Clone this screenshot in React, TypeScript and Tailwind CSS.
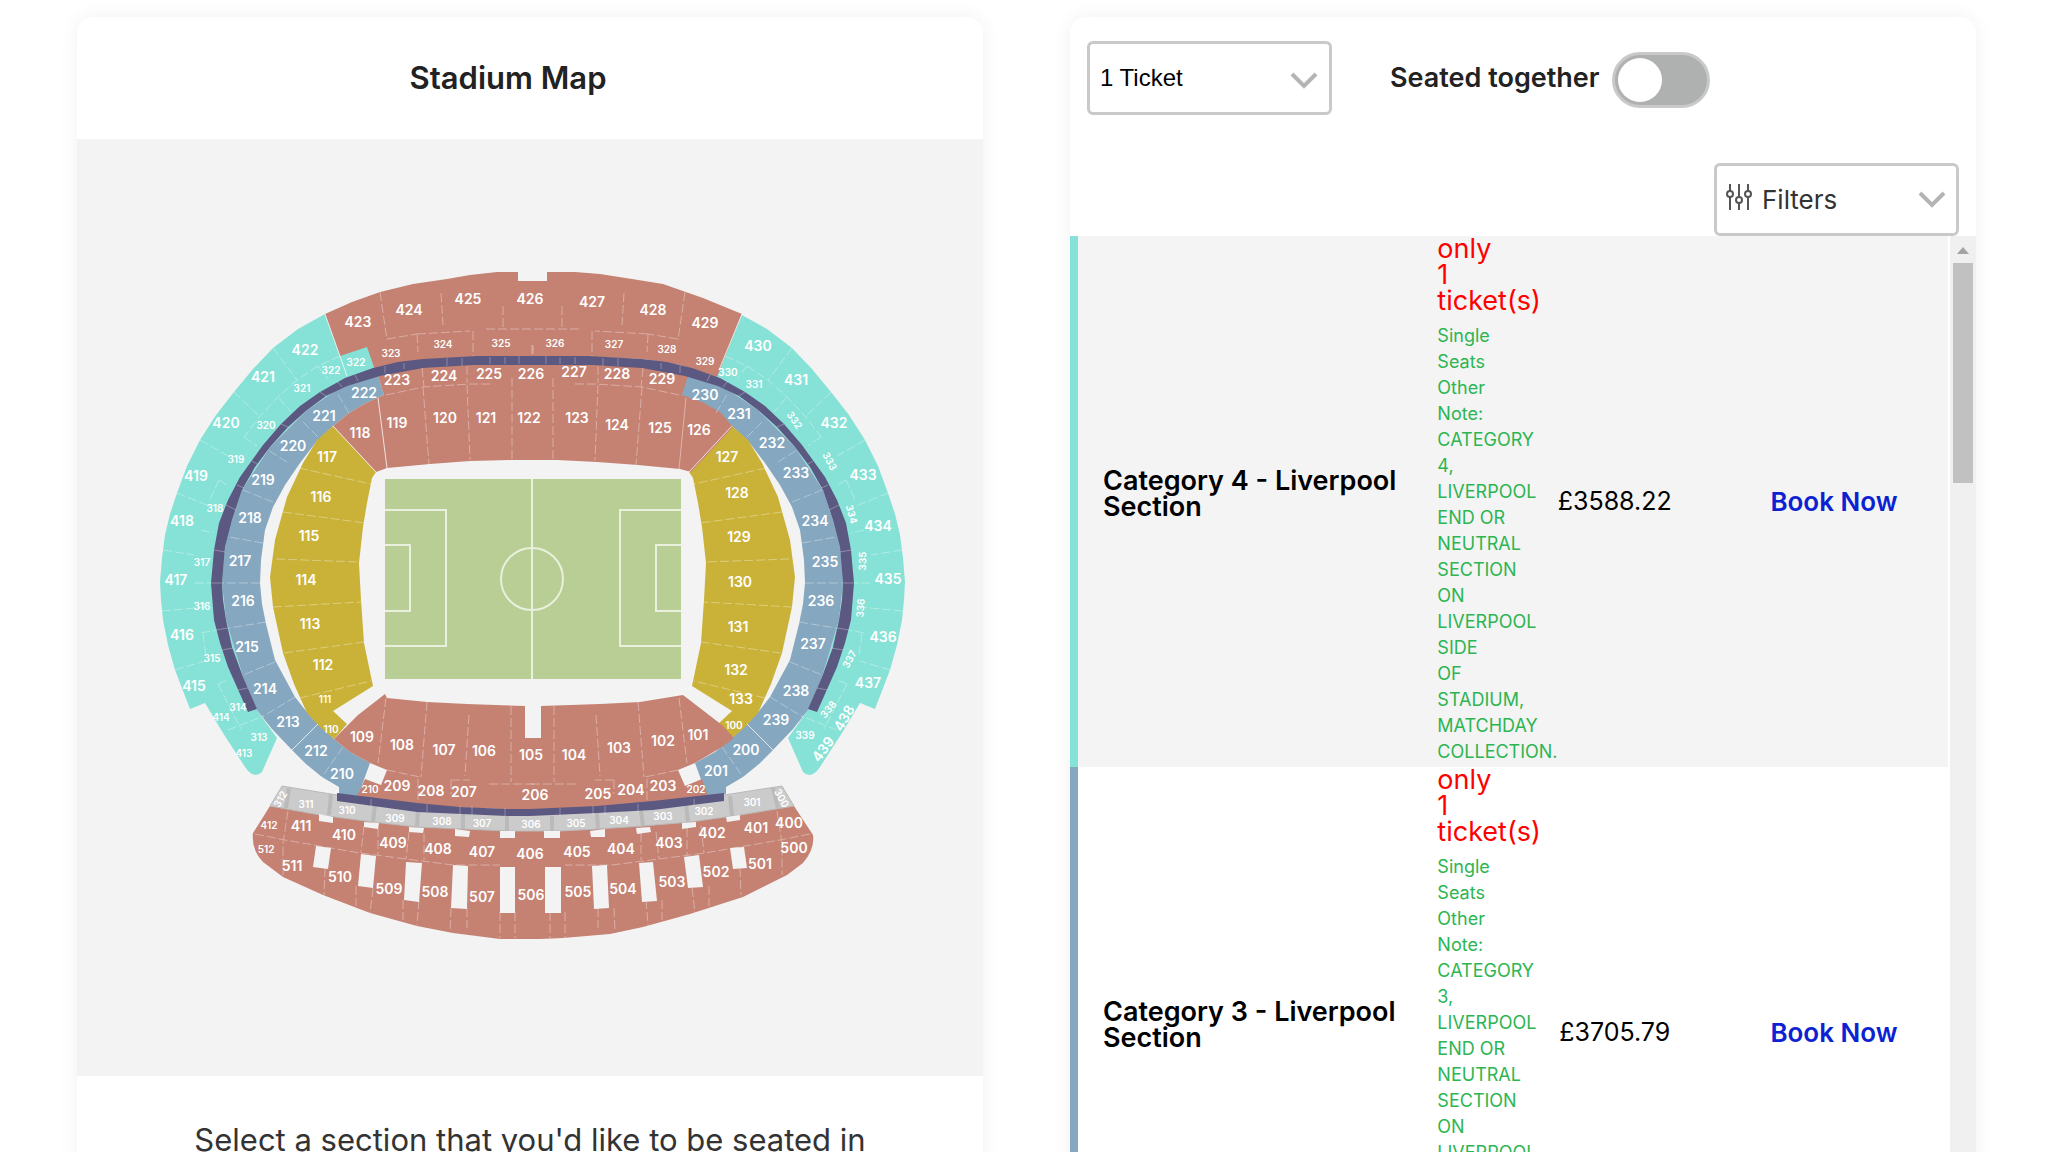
import { useState } from 'react'

type Label = [text: string, x: number, y: number, rotate?: number]

type Offer = {
  id: number
  section: string
  stock: string
  note: string
  price: string
  rowClass: string
  edgeClass: string
}

const OFFERS: Offer[] = [
  {
    id: 1,
    section: 'Category 4 - Liverpool Section',
    stock: 'only\n1\nticket(s)',
    note: 'Single\nSeats\nOther\nNote:\nCATEGORY\n4,\nLIVERPOOL\nEND OR\nNEUTRAL\nSECTION\nON\nLIVERPOOL\nSIDE\nOF\nSTADIUM,\nMATCHDAY\nCOLLECTION.',
    price: '£3588.22',
    rowClass: 'bg-[#f4f4f4]',
    edgeClass: 'border-[#86e2d6]',
  },
  {
    id: 2,
    section: 'Category 3 - Liverpool Section',
    stock: 'only\n1\nticket(s)',
    note: 'Single\nSeats\nOther\nNote:\nCATEGORY\n3,\nLIVERPOOL\nEND OR\nNEUTRAL\nSECTION\nON\nLIVERPOOL\nSIDE\nOF\nSTADIUM,\nMATCHDAY\nCOLLECTION.',
    price: '£3705.79',
    rowClass: 'bg-white',
    edgeClass: 'border-[#85a7bf]',
  },
]

const BIG_LABELS: Label[] = [
  // upper tier
  ['415', 194, 686], ['416', 182, 635], ['417', 176, 580], ['418', 182, 521], ['419', 196, 476],
  ['420', 226, 423], ['421', 263, 377], ['422', 305, 350], ['423', 358, 322], ['424', 409, 310],
  ['425', 468, 299], ['426', 530, 299], ['427', 592, 302], ['428', 653, 310], ['429', 705, 323],
  ['430', 758, 346], ['431', 796, 380], ['432', 834, 423], ['433', 863, 475], ['434', 878, 526],
  ['435', 888, 579], ['436', 883, 637], ['437', 868, 683], ['438', 844, 718, -60], ['439', 823, 749, -54],
  // middle tier
  ['210', 342, 774], ['212', 316, 751], ['213', 288, 722], ['214', 265, 689], ['215', 247, 647],
  ['216', 243, 601], ['217', 240, 561], ['218', 250, 518], ['219', 263, 480], ['220', 293, 446],
  ['221', 324, 416], ['222', 364, 393], ['223', 397, 380], ['224', 444, 376], ['225', 489, 374],
  ['226', 531, 374], ['227', 574, 372], ['228', 617, 374], ['229', 662, 379], ['230', 705, 395],
  ['231', 739, 414], ['232', 772, 443], ['233', 796, 473], ['234', 815, 521], ['235', 825, 562],
  ['236', 821, 601], ['237', 813, 644], ['238', 796, 691], ['239', 776, 720], ['200', 746, 750],
  ['201', 716, 771], ['203', 663, 786], ['204', 631, 790], ['205', 598, 794], ['206', 535, 795],
  ['207', 464, 792], ['208', 431, 791], ['209', 397, 786],
  // lower tier
  ['112', 323, 665], ['113', 310, 624], ['114', 306, 580], ['115', 309, 536], ['116', 321, 497],
  ['117', 327, 457], ['118', 360, 433], ['119', 397, 423], ['120', 445, 418], ['121', 486, 418],
  ['122', 529, 418], ['123', 577, 418], ['124', 617, 425], ['125', 660, 428], ['126', 699, 430],
  ['127', 727, 457], ['128', 737, 493], ['129', 739, 537], ['130', 740, 582], ['131', 738, 627],
  ['132', 736, 670], ['133', 741, 699], ['101', 698, 735], ['102', 663, 741], ['103', 619, 748],
  ['104', 574, 755], ['105', 531, 755], ['106', 484, 751], ['107', 444, 750], ['108', 402, 745],
  ['109', 362, 737],
  // near side stand
  ['411', 301, 826], ['410', 344, 835], ['409', 393, 843], ['408', 438, 849], ['407', 482, 852],
  ['406', 530, 854], ['405', 577, 852], ['404', 621, 849], ['403', 669, 843], ['402', 712, 833],
  ['401', 756, 828], ['400', 789, 823], ['511', 292, 866], ['510', 340, 877], ['509', 389, 889],
  ['508', 435, 892], ['507', 482, 897], ['506', 531, 895], ['505', 578, 892], ['504', 623, 889],
  ['503', 672, 882], ['502', 716, 872], ['501', 760, 864], ['500', 794, 848],
]

const SMALL_LABELS: Label[] = [
  ['323', 391, 353], ['324', 443, 344], ['325', 501, 343], ['326', 555, 343], ['327', 614, 344],
  ['328', 667, 349], ['329', 705, 361], ['330', 728, 372], ['331', 754, 384], ['332', 795, 420, 55],
  ['333', 830, 461, 62], ['334', 852, 514, 75], ['335', 862, 561, -88], ['336', 860, 608, -85],
  ['337', 849, 659, -62], ['338', 828, 709, -50], ['339', 805, 735], ['322', 356, 362],
  ['322', 331, 370], ['321', 302, 388], ['320', 266, 425], ['319', 236, 459], ['318', 215, 508],
  ['317', 202, 562], ['316', 202, 606], ['315', 212, 658], ['314', 238, 707], ['414', 221, 717],
  ['313', 259, 737], ['413', 244, 753], ['111', 325, 699], ['110', 331, 729], ['100', 734, 725],
  ['210', 370, 789], ['202', 696, 789], ['412', 269, 825], ['512', 266, 849],
  ['312', 280, 799, -60], ['311', 306, 804], ['310', 347, 810], ['309', 395, 818], ['308', 442, 821],
  ['307', 482, 823], ['306', 531, 824], ['305', 576, 823], ['304', 619, 820], ['303', 663, 816],
  ['302', 704, 811], ['301', 752, 802], ['300', 782, 798, 60],
]

// Drawn once for the left half, then mirrored for the right half
function HalfBowl() {
  return (
    <>
      <path
        fill="#86e2d6"
        d="M325 314L298 329L273 348L253 369L234 392L216 415L200 440L187 466L177 493L170 514L165 535L162 558L160 582L161 600L163 620L168 645L175 670L190 709L205 703L223 733L245 767Q254 780 262 772L277 738L257 710L243 677L226 620L222 583L232 520L242 490L270 447L307 410L347 383L380 373L360 350Z"
      />
      <path
        fill="#85a7bf"
        d="M378 376L384 395L366 403L349 413L333 426L316 442L300 463L285 485L273 507L265 530L261 560L260 583L262 604L266 624L275 660L295 697L306 711L318 724L334 739L350 752L370 763L358 796L339 794V787L322 777L306 764L292 750L272 729L257 710L243 677L226 620L222 583L225 547L232 520L242 490L270 447L307 410L347 383Z"
      />
      <path
        fill="#cab239"
        d="M333 426L376 472L372 478L367 503L363 527L359 563L361 600L364 643L373 686L333 711L347 724L334 739L320 727L307 713L294 684L283 653L273 607L270 577L275 540L287 497L303 463L317 440Z"
      />
    </>
  )
}

function HalfRing() {
  return (
    <path
      fill="#5b5882"
      d="M534 356H477L423 359L398 362L373 368L345 378L320 392L300 406L281 424L263 445L240 477L228 500L219 523L214 550L211 583L214 620L220 643L228 667L248 712L257 709L243 677L232 647L226 620L223 600L222 583L225 547L232 520L242 490L255 467L270 447L288 427L307 410L326 396L347 386L380 376L423 368L473 365H534Z"
    />
  )
}

function HalfLines() {
  return (
    <>
      <g opacity="0.35" strokeDasharray="9 3">
        <path d="M441 293L443 325M380 292L387 340M503 306V329M486 329H534M417 334L470 331M387 339L417 334" />
        <path d="M417 334L418 352M473 331V356M533 345V356" />
        <path d="M273 348L297 380M234 392L260 417M200 440L228 456M177 493L209 506M163 550L194 555M195 583H211M162 611L206 607M175 670L205 661M218 684L228 680M218 684L241 729M228 730L264 716" />
        <path d="M340 356L318 366L297 380L278 397L260 416L244 437M219 480L209 502M203 634L206 656M318 366L328 379M279 398L291 412M219 480L229 486M244 437L257 446M201 530L214 533M201 633L216 630" />
        <path d="M349 413L337 393M318 437L301 420M287 462L268 450M273 502L243 490M263 543L229 537M260 583H223M266 622L229 628M275 662L243 675M295 697L262 717M343 747L322 777" />
        <path d="M299 468L371 484M283 512L365 523M276 559L359 562M273 607L361 602M284 653L364 642M300 698L371 681" />
        <path d="M423 387L429 465M467 385L470 460M512 378V460M386 395L423 387L470 384H492M422 368L424 387M467 366V383" />
        <path d="M386 698L378 763M427 702L421 777M469 715L465 776M511 706V782M489 784H534M387 770L420 777M451 780V794M451 780H470M418 779V800" />
        <path d="M255 834L285 840L360 853L406 859L453 865H500M288 811L283 843V875M325 868L324 895M356 886V906M373 888L370 913M403 900V920M419 900L417 925M451 908L450 932M467 908V928M500 912V938M515 912V938M364 826L361 853M378 828V855M409 832L406 859M424 833V860" />
      </g>
      <g opacity="0.3">
        <path d="M320 392L326 396M337 381L342 387M355 375L358 381M385 366V373M404 363V369M447 358V366M462 358V366M490 357V364M505 357V364M519 356V364M281 424L288 427M252 461L257 464M237 485L244 488M226 505L236 510M214 550L225 552M211 583H222M216 630L228 628M222 650L233 648M238 690L248 688" />
        <path d="M371 799V806M427 804V812M460 806V815M472 806V815M505 808V816" />
      </g>
      <path opacity="0.75" d="M333 426L376 472M318 724L292 750" />
    </>
  )
}

function StadiumMap() {
  return (
    <svg viewBox="77 139 906 937" className="block w-full" role="img" aria-label="Stadium seating plan">
      <rect x="385" y="479" width="296" height="200" fill="#b8ce94" />
      <g fill="none" stroke="#e9f0dd" strokeWidth="2">
        <path d="M532 479V679" />
        <circle cx="532" cy="579" r="31" />
        <path d="M385 510H446V646H385M385 545H410V611H385M681 510H620V646H681M681 545H656V611H681" />
      </g>

      {/* far side, upper and middle tiers */}
      <HalfBowl />
      <g transform="translate(1065) scale(-1 1)">
        <HalfBowl />
      </g>
      <g fill="#c58273">
        <path d="M325 314L352 302L380 292L413 284L447 279L470 275L497 272H518V281H547V272L575 272L600 274L632 279L663 284L703 298L742 314L717 377L680 365L643 359L590 357H477L423 360L373 369L340 356Z" />
        <path d="M378 376L423 367L473 364H593L640 366L688 376L682 395L702 402L720 412L733 427L691 472L680 469L638 465L597 462L557 460H512L470 461L430 464L387 468L376 472L333 426L349 413L366 403L384 395Z" />
        <path d="M334 739L358 715L385 694L387 698L427 702L467 704L525 706V738H541V706L600 704L640 702L683 695L722 725L734 738L722 747L695 763L678 770L685 786L702 779L708 796L653 803L597 808L530 810L417 806L357 796L365 779L381 785L387 770L370 763L350 752Z" />
        <path d="M270 806L253 833Q251 849 263 862L283 877L323 895L370 913L417 926L453 933L500 939H540L563 938L610 934L643 927L690 914L743 897L787 875L803 863Q815 849 813 835L794 806L700 815H360Z" />
      </g>
      <path fill="#86e2d6" d="M340 356L367 347L375 370L347 380Z" />
      <HalfRing />
      <g transform="translate(1065) scale(-1 1)">
        <HalfRing />
      </g>

      {/* executive boxes */}
      <path
        fill="#cbcbcb"
        stroke="#bababa"
        d="M282 786L337 795L417 808L507 814H560L653 808L724 795L782 786L794 806L740 815L690 822L643 826L597 829L560 831H507L463 829L417 827L373 822L320 815L270 806Z"
      />
      <path
        fill="none"
        stroke="#bababa"
        strokeWidth="4"
        d="M289 788L286 808M331 794L329 815M375 804L373 822M418 810L417 827M463 814V829M507 816V831M552 816V831M597 812L598 829M641 810L643 826M686 804L688 822M730 796L732 816M773 788L778 808"
      />
      <path
        fill="#5b5882"
        d="M337 793L417 803L460 807L507 809H530L597 806L653 801L724 793V801L653 810L597 813L530 816H507L417 812L337 801Z"
      />

      {/* stairways */}
      <g fill="#f3f3f3">
        <path d="M319 814L333 817V823L319 821ZM364 822L379 823L378 829L364 827ZM409 827L424 828L423 833L409 832ZM455 829L470 831L469 837L455 836ZM500 831H515V838H500ZM544 831H560V838H544ZM590 831L605 829V837H591ZM636 828L650 827L651 832L637 834ZM682 823L696 822V827L682 829ZM726 817L740 815V820L727 822Z" />
        <path d="M316 846L331 848L328 869L313 867ZM361 854L376 856L373 888L358 886ZM406 862L422 863L419 902L404 900ZM453 865L468 866L467 909L451 908ZM500 867H515V913H500ZM545 867H561V913H545ZM592 866L607 865L609 908L594 909ZM639 863L653 862L657 901L642 902ZM684 857L699 855L703 887L688 888ZM730 848L744 847L747 868L733 869Z" />
      </g>

      <g fill="none" stroke="#ffffff" strokeWidth="1">
        <HalfLines />
        <g transform="translate(1065) scale(-1 1)">
          <HalfLines />
        </g>
        <path opacity="0.75" d="M325 314L347 376M742 314L719 370M378 398L387 468" />
        <path opacity="0.4" d="M686 398L679 469" />
      </g>

      <g className="font-['Inter',sans-serif] font-semibold" fill="#ffffff" textAnchor="middle">
        <g fontSize="14">
          {BIG_LABELS.map(([text, x, y, rotate = 0]) => (
            <text key={text} x={x} y={y + 5} transform={`rotate(${rotate} ${x} ${y})`}>
              {text}
            </text>
          ))}
        </g>
        <g fontSize="10">
          {SMALL_LABELS.map(([text, x, y, rotate = 0]) => (
            <text key={`${text}-${x}`} x={x} y={y + 4} transform={`rotate(${rotate} ${x} ${y})`}>
              {text}
            </text>
          ))}
        </g>
      </g>
    </svg>
  )
}

function Chevron() {
  return (
    <svg viewBox="0 0 28 18" className="w-7 h-[18px] shrink-0" fill="none" stroke="#b4b4b4" strokeWidth="4" aria-hidden="true">
      <path d="M2 2L14 14L26 2" />
    </svg>
  )
}

function SlidersIcon() {
  return (
    <svg viewBox="0 0 26 26" className="mb-1.5 size-[26px] shrink-0" fill="none" stroke="#555555" strokeWidth="2" aria-hidden="true">
      <path d="M4 0V7M4 13V26M13 0V13M13 19V26M22 0V7M22 13V26" />
      <circle cx="4" cy="10" r="3" />
      <circle cx="13" cy="16" r="3" />
      <circle cx="22" cy="10" r="3" />
    </svg>
  )
}

function OfferRow({ offer }: { offer: Offer }) {
  return (
    <tr className={offer.rowClass}>
      <th
        scope="row"
        className={`border-l-8 pl-[25px] pb-4 align-middle text-left text-[27px] leading-[26px] font-semibold ${offer.edgeClass}`}
      >
        {offer.section}
      </th>
      <td className="pb-0.5 align-top whitespace-pre-line">
        <p className="text-[27px] leading-[26px] text-[#ff0000]">{offer.stock}</p>
        <p className="mt-[9px] text-lg leading-[26px] text-[#2db552]">{offer.note}</p>
      </td>
      <td className="pr-2 text-center align-middle text-[25px] whitespace-nowrap">{offer.price}</td>
      <td className="pl-10 text-center align-middle">
        <a href="#book" className="text-[26px] font-semibold text-[#0c22d2]">
          Book Now
        </a>
      </td>
    </tr>
  )
}

export default function App() {
  const [quantity, setQuantity] = useState('1')
  const [together, setTogether] = useState(false)

  return (
    <main className="h-screen overflow-hidden bg-white pt-[17px] pl-[77px] pr-[72px] font-['Inter',sans-serif] text-black">
      <div className="grid grid-cols-2 items-start gap-[87px]">
        <section className="rounded-2xl bg-white shadow-[0_0_20px_rgba(0,0,0,0.06)]">
          <h1 className="flex h-[122px] items-center justify-center pr-11 text-[31px] font-semibold text-[#222222]">
            Stadium Map
          </h1>
          <div className="bg-[#f3f3f3]">
            <StadiumMap />
          </div>
          <p className="pt-11 pb-12 text-center text-[31px] leading-10 text-[#333333]">
            Select a section that you'd like to be seated in
          </p>
        </section>

        <section className="rounded-2xl bg-white shadow-[0_0_20px_rgba(0,0,0,0.06)]">
          <div className="flex items-center px-[17px] pt-6">
            <div className="relative">
              <select
                aria-label="Number of tickets"
                value={quantity}
                onChange={(e) => setQuantity(e.target.value)}
                className="block h-[74px] w-[245px] appearance-none rounded-md border-3 border-[#c9c9c9] bg-white pl-2.5 font-['Liberation_Sans',sans-serif] text-2xl text-black"
              >
                <option value="1">1 Ticket</option>
                <option value="2">2 Tickets</option>
                <option value="3">3 Tickets</option>
                <option value="4">4 Tickets</option>
              </select>
              <span className="pointer-events-none absolute top-[31px] right-3.5">
                <Chevron />
              </span>
            </div>
            <div className="ml-[58px] flex items-center gap-3">
              <label htmlFor="together" className="text-[27px] font-semibold text-[#222222]">
                Seated together
              </label>
              <input
                id="together"
                type="checkbox"
                checked={together}
                onChange={(e) => setTogether(e.target.checked)}
                className="mt-1 h-14 w-[98px] appearance-none rounded-full border-3 border-[#c9c9c9] bg-[#afb1b1] p-[3px] before:block before:size-11 before:rounded-full before:bg-white checked:bg-[#0c22d2] checked:before:ml-auto"
              />
            </div>
          </div>

          <div className="mt-12 flex justify-end pr-[17px]">
            <button
              type="button"
              className="flex h-[73px] w-[245px] items-center rounded-md border-3 border-[#c9c9c9] bg-white pr-2.5 pl-[9px] text-[#333333]"
            >
              <SlidersIcon />
              <span className="ml-2.5 flex-1 text-left text-[26px]">Filters</span>
              <Chevron />
            </button>
          </div>

          <div className="flex">
            <table className="flex-1 table-fixed border-collapse">
              <colgroup>
                <col className="w-[42%]" />
                <col className="w-[13%]" />
                <col className="w-[14%]" />
                <col className="w-[31%]" />
              </colgroup>
              <tbody>
                {OFFERS.map((offer) => (
                  <OfferRow key={offer.id} offer={offer} />
                ))}
              </tbody>
            </table>
            <div className="ml-0.5 w-[26px] bg-[#f0f0f0] px-[3px] pt-[11px]" aria-hidden="true">
              <svg viewBox="0 0 12 7" className="mx-auto block h-[7px] w-3" fill="#a3a3a3">
                <path d="M6 0L12 7H0Z" />
              </svg>
              <div className="mt-[9px] h-[220px] bg-[#c1c1c1]" />
            </div>
          </div>
        </section>
      </div>
    </main>
  )
}
